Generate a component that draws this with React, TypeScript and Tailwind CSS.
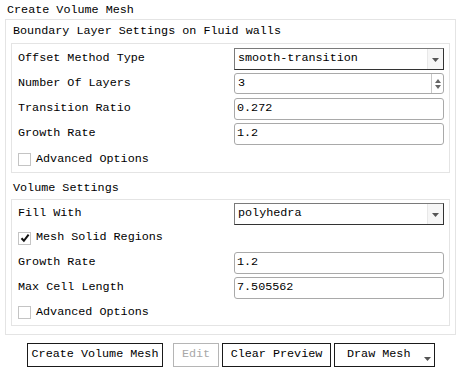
import React from "react";

const font = { fontFamily: '"Liberation Mono", "Noto Sans CJK SC", monospace' };

function Caret() {
  return (
    <svg width="7" height="4" viewBox="0 0 7 4">
      <path d="M0 0h7L3.5 4z" fill="#555" />
    </svg>
  );
}

function Select({ value }: { value: string }) {
  return (
    <div className="flex h-[22px] w-[210px] items-center border border-[#7a7a7a] border-r-[#333] border-b-[#333] bg-white">
      <span className="flex-1 pl-[3px]">{value}</span>
      <span className="flex h-full w-[16px] items-center justify-center border-l border-[#e8e8e8] bg-[#f6f6f6] pt-[2px]">
        <Caret />
      </span>
    </div>
  );
}

function TextBox({ value }: { value: string }) {
  return (
    <div className="flex h-[22px] w-[210px] items-center rounded-[3px] border border-[#a9a9a9] bg-white pl-[2px]">
      {value}
    </div>
  );
}

function Spinner({ value }: { value: string }) {
  return (
    <div className="flex h-[21px] w-[210px] items-center rounded-[3px] border border-[#a9a9a9] bg-white">
      <span className="flex-1 pl-[3px]">{value}</span>
      <span className="flex h-full w-[12px] flex-col items-center justify-center gap-[2px] border-l border-[#c8c8c8]">
        <svg width="6" height="4" viewBox="0 0 6 4">
          <path d="M0 4h6L3 0z" fill="#666" />
        </svg>
        <svg width="6" height="4" viewBox="0 0 6 4">
          <path d="M0 0h6L3 4z" fill="#666" />
        </svg>
      </span>
    </div>
  );
}

function Row({ label, h = "h-[25px]", children }: { label: string; h?: string; children: React.ReactNode }) {
  return (
    <div className={"flex items-center justify-between " + h}>
      <span className="pl-[6px]">{label}</span>
      {children}
    </div>
  );
}

function Check({ label, checked, h = "h-[24px]" }: { label: string; checked?: boolean; h?: string }) {
  return (
    <div className={"flex items-center gap-[5px] pl-[6px] " + h}>
      <span className="flex h-[13px] w-[13px] items-center justify-center border border-[#c4c4c4] bg-white">
        {checked ? (
          <svg width="10" height="10" viewBox="0 0 10 10">
            <path d="M1.5 5.2l2.4 2.6L8.6 1.6" stroke="#111" strokeWidth="2" fill="none" />
          </svg>
        ) : null}
      </span>
      <span>{label}</span>
    </div>
  );
}

function Btn({ children, disabled, w }: { children: React.ReactNode; disabled?: boolean; w: string }) {
  return (
    <div
      className={
        "flex h-[24px] items-center justify-center border " +
        w +
        (disabled ? " border-[#b5b5b5] text-[#a8a8a8]" : " border-[#1a1a1a] text-black")
      }
    >
      {children}
    </div>
  );
}

export default function App() {
  return (
    <div className="h-[374px] w-[459px] bg-white text-[11.75px] text-black" style={font}>
      <div className="flex h-[19px] items-center pl-[7px] pt-[2px]">Create Volume Mesh</div>
      <div className="ml-[5px] mr-[3px] border border-[#e4e4e4] px-[5px] pb-[8px]">
        <div className="flex h-[23px] items-center pl-[2px]">Boundary Layer Settings on Fluid walls</div>
        <div className="border border-[#e4e4e4] pr-[5px] pt-[2px]">
          <Row label="Offset Method Type">
            <Select value="smooth-transition" />
          </Row>
          <Row label="Number Of Layers">
            <Spinner value="3" />
          </Row>
          <Row label="Transition Ratio">
            <TextBox value="0.272" />
          </Row>
          <Row label="Growth Rate">
            <TextBox value="1.2" />
          </Row>
          <Check label="Advanced Options" h="h-[26px] pt-[1px]" />
        </div>
        <div className="flex h-[26px] items-center pl-[2px] pt-[6px]">Volume Settings</div>
        <div className="border border-[#e4e4e4] pr-[5px] pt-[2px] pb-[1px]">
          <Row label="Fill With" h="h-[24px]">
            <Select value="polyhedra" />
          </Row>
          <Check label="Mesh Solid Regions" checked />
          <Row label="Growth Rate">
            <TextBox value="1.2" />
          </Row>
          <Row label="Max Cell Length" h="h-[25px] pt-[1px]">
            <TextBox value="7.505562" />
          </Row>
          <Check label="Advanced Options" h="h-[24px] pt-[1px]" />
        </div>
      </div>
      <div className="mt-[8px] flex pl-[27px]">
        <Btn w="w-[136px]">Create Volume Mesh</Btn>
        <div className="ml-[10px]">
          <Btn disabled w="w-[46px]">
            Edit
          </Btn>
        </div>
        <div className="ml-[3px]">
          <Btn w="w-[109px]">Clear Preview</Btn>
        </div>
        <div className="ml-[3px]">
          <div className="flex h-[24px] w-[101px] items-center border border-[#1a1a1a] pl-[12px]">
            <span>Draw Mesh</span>
            <span className="ml-[14px] mt-[8px]">
              <Caret />
            </span>
          </div>
        </div>
      </div>
    </div>
  );
}
